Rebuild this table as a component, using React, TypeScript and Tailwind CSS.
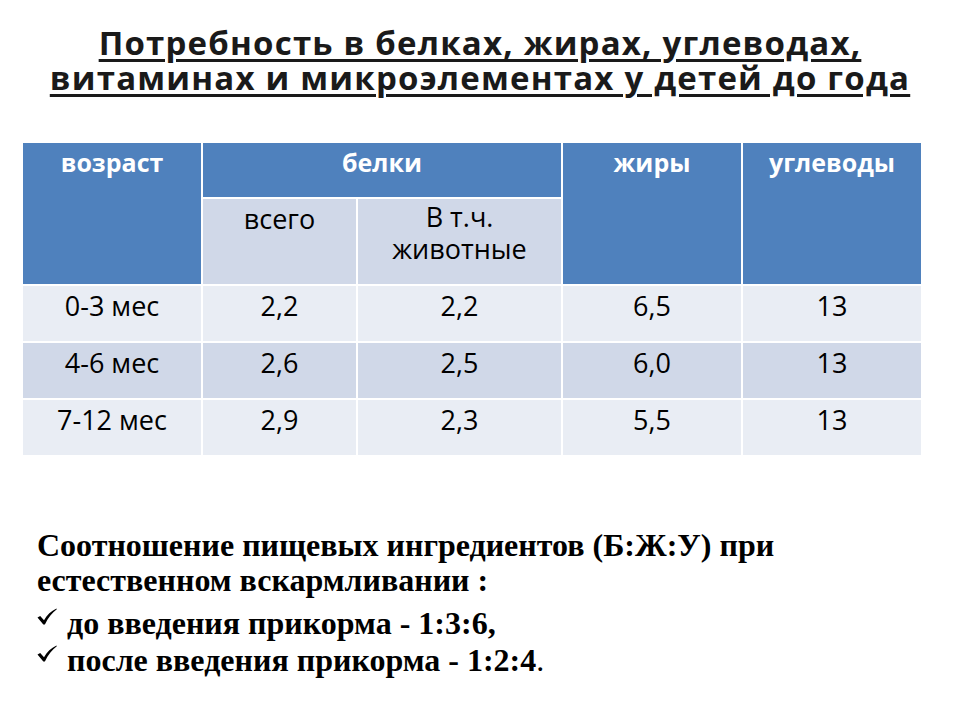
import React from "react";

const rows = [
  ["0-3 мес", "2,2", "2,2", "6,5", "13"],
  ["4-6 мес", "2,6", "2,5", "6,0", "13"],
  ["7-12 мес", "2,9", "2,3", "5,5", "13"],
];

function Check() {
  return (
    <svg width="20" height="17" viewBox="0 0 20 17" className="shrink-0 mt-[2px]">
      <path
        d="M0.5 9.5 L3.2 8 L7 12.3 C10 7 14 3 19.5 0.5 L19.8 1.3 C15 5 11 10 7.9 16.5 L6.3 16.5 Z"
        fill="#000"
      />
    </svg>
  );
}

export default function App() {
  return (
    <div className="w-[960px] h-[720px] bg-white relative overflow-hidden">
      {/* Title */}
      <div className="pt-[25px] text-center font-['Open_Sans',sans-serif] font-bold text-[33px] leading-[35px] text-[#1a1a1a] underline decoration-[3px] underline-offset-[4px] tracking-[1.2px]">
        <div>Потребность в белках, жирах, углеводах,</div>
        <div>витаминах и микроэлементах у детей до года</div>
      </div>

      {/* Table */}
      <div className="ml-[23px] mt-[48px] grid grid-cols-[178px_153px_203px_178px_178px] grid-rows-[54px_85px_55px_55px_55px] gap-[2px] bg-white font-['Open_Sans',sans-serif] text-[27px] leading-[32px]">
        <div className="row-span-2 bg-[#4f81bd] text-white font-bold text-[25px] text-center pt-[3px]">возраст</div>
        <div className="col-span-2 bg-[#4f81bd] text-white font-bold text-[25px] text-center pt-[3px]">белки</div>
        <div className="row-span-2 bg-[#4f81bd] text-white font-bold text-[25px] text-center pt-[3px]">жиры</div>
        <div className="row-span-2 bg-[#4f81bd] text-white font-bold text-[25px] text-center pt-[3px]">углеводы</div>
        <div className="bg-[#d0d8e8] text-black text-center pt-[4px]">всего</div>
        <div className="bg-[#d0d8e8] text-black text-center pt-[2px]">
          В т.ч.
          <br />
          животные
        </div>
        {rows.map((r, i) =>
          r.map((c, j) => (
            <div
              key={i + "-" + j}
              className={`${i % 2 === 0 ? "bg-[#e9edf4]" : "bg-[#d0d8e8]"} text-black text-center pt-[4px]`}
            >
              {c}
            </div>
          ))
        )}
      </div>

      {/* Notes */}
      <div className="ml-[37px] mt-[73px] font-['Liberation_Serif',serif] font-bold text-[32px] leading-[35px] text-black">
        <div>Соотношение пищевых ингредиентов (Б:Ж:У) при</div>
        <div>естественном вскармливании :</div>
        <div className="flex items-start gap-[10px] mt-[8px]">
          <Check />
          <span>до введения прикорма - 1:3:6,</span>
        </div>
        <div className="flex items-start gap-[10px] mt-[2px]">
          <Check />
          <span>
            после введения прикорма - 1:2:4<span className="font-normal">.</span>
          </span>
        </div>
      </div>
    </div>
  );
}
